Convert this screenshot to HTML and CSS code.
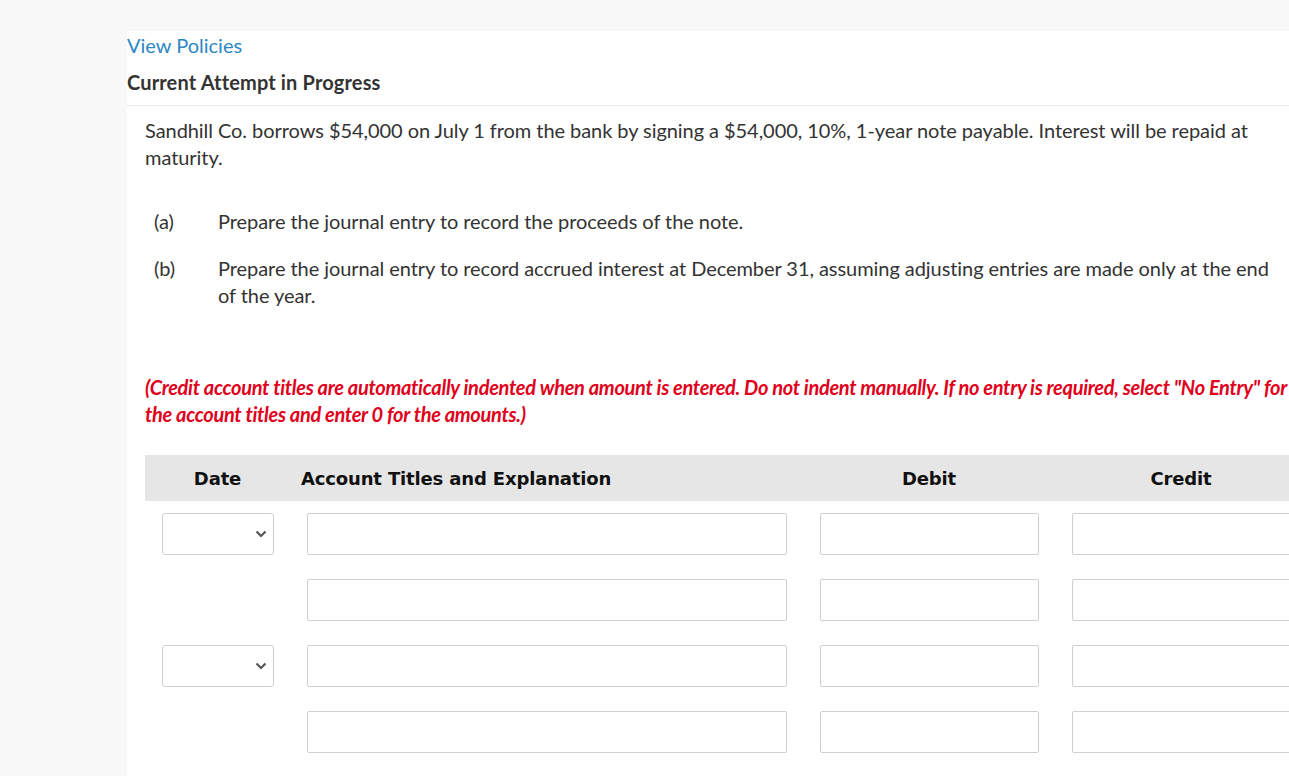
FILE: index.html
```html
<!DOCTYPE html>
<html lang="en">
<head>
<meta charset="utf-8">
<title>Current Attempt in Progress</title>
<link rel="stylesheet" href="styles.css">
</head>
<body>
<div class="page">
  <main class="panel">
    <a class="policies" href="#">View Policies</a>
    <h2 class="attempt">Current Attempt in Progress</h2>
    <section class="question">
      <p class="intro">Sandhill Co. borrows $54,000 on July 1 from the bank by signing a $54,000, 10%, 1-year note payable. Interest will be repaid at maturity.</p>
      <ol class="parts">
        <li><span class="label">(a)</span><span class="ptext">Prepare the journal entry to record the proceeds of the note.</span></li>
        <li><span class="label">(b)</span><span class="ptext">Prepare the journal entry to record accrued interest at December 31, assuming adjusting entries are made only at the end of the year.</span></li>
      </ol>
      <p class="note">(Credit account titles are automatically indented when amount is entered. Do not indent manually. If no entry is required, select "No Entry" for the account titles and enter 0 for the amounts.)</p>
      <table class="journal">
        <colgroup>
          <col class="w-date"><col class="w-acct"><col class="w-num"><col class="w-num">
        </colgroup>
        <thead>
          <tr>
            <th>Date</th>
            <th class="h-acct">Account Titles and Explanation</th>
            <th>Debit</th>
            <th>Credit</th>
          </tr>
        </thead>
        <tbody>
          <tr>
            <td><div class="sel"><select aria-label="Date"><option></option></select><svg class="chev" width="12" height="8" viewBox="0 0 12 8"><path d="M1.5 1.5 L6 6 L10.5 1.5" fill="none" stroke="#555" stroke-width="2.2"/></svg></div></td>
            <td><input class="acct" type="text" aria-label="Account"></td>
            <td><input class="num" type="text" aria-label="Debit"></td>
            <td><input class="num" type="text" aria-label="Credit"></td>
          </tr>
          <tr>
            <td></td>
            <td><input class="acct" type="text" aria-label="Account"></td>
            <td><input class="num" type="text" aria-label="Debit"></td>
            <td><input class="num" type="text" aria-label="Credit"></td>
          </tr>
          <tr>
            <td><div class="sel"><select aria-label="Date"><option></option></select><svg class="chev" width="12" height="8" viewBox="0 0 12 8"><path d="M1.5 1.5 L6 6 L10.5 1.5" fill="none" stroke="#555" stroke-width="2.2"/></svg></div></td>
            <td><input class="acct" type="text" aria-label="Account"></td>
            <td><input class="num" type="text" aria-label="Debit"></td>
            <td><input class="num" type="text" aria-label="Credit"></td>
          </tr>
          <tr>
            <td></td>
            <td><input class="acct" type="text" aria-label="Account"></td>
            <td><input class="num" type="text" aria-label="Debit"></td>
            <td><input class="num" type="text" aria-label="Credit"></td>
          </tr>
        </tbody>
      </table>
    </section>
  </main>
</div>
</body>
</html>
```
FILE: styles.css
```css
html, body {
  margin: 0;
  padding: 0;
  background: #f8f8f8;
  overflow: hidden;
}
body {
  font-family: Lato, "Liberation Sans", sans-serif;
  color: #333;
  font-size: 20px;
}
.page {
  padding: 31px 0 0 127px;
  width: 1300px;
}
.panel {
  background: #fff;
  min-height: 760px;
}
.policies {
  display: block;
  color: #2d87c3;
  text-decoration: none;
  line-height: 28px;
}
.attempt {
  margin: 9px 0 0;
  font-size: 20px;
  font-weight: 700;
  line-height: 28px;
  color: #333;
  letter-spacing: 0.15px;
  padding-bottom: 9px;
  border-bottom: 1px solid #e8e8e8;
}
.question {
  padding: 11px 0 0 18px;
}
.intro {
  margin: 0;
  line-height: 27px;
  letter-spacing: -0.06px;
  width: 1116px;
}
.parts {
  list-style: none;
  margin: 37px 0 0;
  padding: 0;
  display: flex;
  flex-direction: column;
  gap: 20px;
}
.parts li {
  display: grid;
  grid-template-columns: 73px 1fr;
  line-height: 27px;
  letter-spacing: -0.06px;
  width: 1140px;
}
.label {
  padding-left: 9px;
}
.note {
  margin: 65px 0 0;
  color: #e0001b;
  font-style: italic;
  font-weight: 700;
  line-height: 27px;
  letter-spacing: -0.3px;
  width: 1150px;
}
.journal {
  margin-top: 27px;
  border-collapse: collapse;
  table-layout: fixed;
  width: 1162px;
}
.w-date { width: 145px; }
.w-acct { width: 513px; }
.w-num { width: 252px; }
.journal th {
  background: #e6e6e6;
  height: 46px;
  padding: 0;
  font-family: "DejaVu Sans", Verdana, sans-serif;
  font-weight: 700;
  font-size: 18px;
  letter-spacing: -0.15px;
  color: #111;
  text-align: center;
}
.journal th.h-acct {
  text-align: left;
  padding-left: 11px;
}
.journal td {
  padding: 12px 17px;
  height: 42px;
  vertical-align: top;
}
.sel {
  position: relative;
  width: 112px;
  height: 42px;
}
.sel select {
  appearance: none;
  -webkit-appearance: none;
  width: 112px;
  height: 42px;
  border: 1px solid #cfcfcf;
  border-radius: 3px;
  background: #fff;
  margin: 0;
  display: block;
}
.chev {
  position: absolute;
  right: 7px;
  top: 17px;
}
input.acct, input.num {
  display: block;
  box-sizing: border-box;
  height: 42px;
  border: 1px solid #cfcfcf;
  border-radius: 2px;
  margin: 0;
  padding: 0 8px;
  background: #fff;
}
input.acct { width: 480px; }
input.num { width: 219px; }
```
